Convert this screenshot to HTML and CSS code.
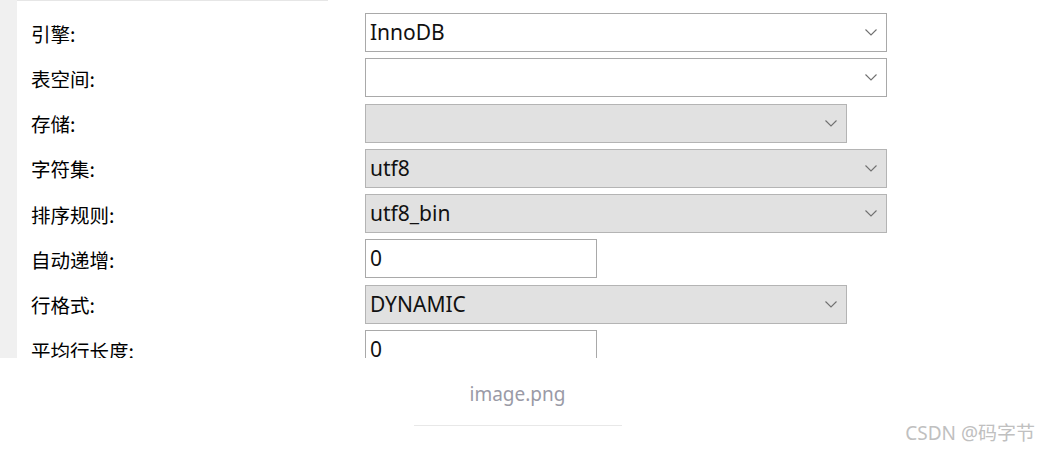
FILE: index.html
```html
<!DOCTYPE html>
<html lang="zh">
<head>
<meta charset="utf-8">
<link rel="stylesheet" href="styles.css">
</head>
<body>
<div class="shot">
  <div class="strip"></div>
  <div class="panel">
    <div class="topline"></div>
    <div class="form">
      <div class="label">引擎:</div>
      <div class="field"><div class="box wide white"><span class="val">InnoDB</span><svg class="chev" viewBox="0 0 12 7"><polyline points="0.5,0.5 6,6 11.5,0.5"/></svg></div></div>
      <div class="label">表空间:</div>
      <div class="field"><div class="box wide white"><span class="val"></span><svg class="chev" viewBox="0 0 12 7"><polyline points="0.5,0.5 6,6 11.5,0.5"/></svg></div></div>
      <div class="label">存储:</div>
      <div class="field"><div class="box mid gray"><span class="val"></span><svg class="chev" viewBox="0 0 12 7"><polyline points="0.5,0.5 6,6 11.5,0.5"/></svg></div></div>
      <div class="label">字符集:</div>
      <div class="field"><div class="box wide gray"><span class="val">utf8</span><svg class="chev" viewBox="0 0 12 7"><polyline points="0.5,0.5 6,6 11.5,0.5"/></svg></div></div>
      <div class="label">排序规则:</div>
      <div class="field"><div class="box wide gray"><span class="val">utf8_bin</span><svg class="chev" viewBox="0 0 12 7"><polyline points="0.5,0.5 6,6 11.5,0.5"/></svg></div></div>
      <div class="label">自动递增:</div>
      <div class="field"><div class="box small white"><span class="val">0</span></div></div>
      <div class="label">行格式:</div>
      <div class="field"><div class="box mid gray"><span class="val">DYNAMIC</span><svg class="chev" viewBox="0 0 12 7"><polyline points="0.5,0.5 6,6 11.5,0.5"/></svg></div></div>
      <div class="label">平均行长度:</div>
      <div class="field"><div class="box small white"><span class="val">0</span></div></div>
    </div>
  </div>
</div>
<div class="caption-area">
  <div class="caption">image.png</div>
  <div class="rule"></div>
  <div class="watermark">CSDN @码字节</div>
</div>
</body>
</html>
```
FILE: styles.css
```css
html, body {
  margin: 0;
  padding: 0;
  background: #ffffff;
}
body {
  width: 1039px;
  height: 451px;
  overflow: hidden;
  font-family: "Noto Sans", "Noto Sans CJK SC", sans-serif;
}
.shot {
  display: flex;
  height: 358px;
  overflow: hidden;
}
.strip {
  width: 17px;
  flex: none;
  background: #f0f0f0;
}
.panel {
  flex: 1;
  background: #ffffff;
  display: flex;
  flex-direction: column;
}
.topline {
  height: 1px;
  width: 311px;
  background: #e6e6e6;
  flex: none;
}
.form {
  display: grid;
  grid-template-columns: 348px 1fr;
  grid-auto-rows: 39px;
  row-gap: 6.3px;
  padding-top: 12px;
}
.label {
  padding-left: 14px;
  display: flex;
  align-items: center;
  font-family: "Noto Sans CJK SC", sans-serif;
  font-size: 19.5px;
  color: #000000;
  padding-top: 1px;
}
.field {
  display: flex;
}
.box {
  box-sizing: border-box;
  height: 39px;
  border: 1px solid #a9a9a9;
  display: flex;
  align-items: center;
  justify-content: space-between;
  padding: 0 9px 0 4px;
}
.box.wide { width: 522px; }
.box.mid { width: 482px; }
.box.small { width: 232px; }
.box.white { background: #ffffff; }
.box.gray { background: #e1e1e1; border-color: #b4b4b4; }
.val {
  font-family: "Noto Sans", sans-serif;
  font-size: 21px;
  color: #111111;
  line-height: 1;
}
.chev {
  width: 12px;
  height: 7px;
  fill: none;
  stroke: #707070;
  stroke-width: 1.1;
}
.caption-area {
  position: relative;
  height: 93px;
}
.caption {
  text-align: center;
  width: 1035px;
  padding-top: 22px;
  font-family: "Noto Sans", sans-serif;
  font-size: 19px;
  color: #9a9aa6;
  line-height: 28px;
}
.rule {
  margin: 17px 0 0 414px;
  width: 208px;
  height: 1px;
  background: #e8e8e8;
}
.watermark {
  position: absolute;
  right: 4px;
  top: 60px;
  font-family: "Noto Sans", "Noto Sans CJK SC", sans-serif;
  font-size: 19px;
  color: #c0c0c0;
}
```
